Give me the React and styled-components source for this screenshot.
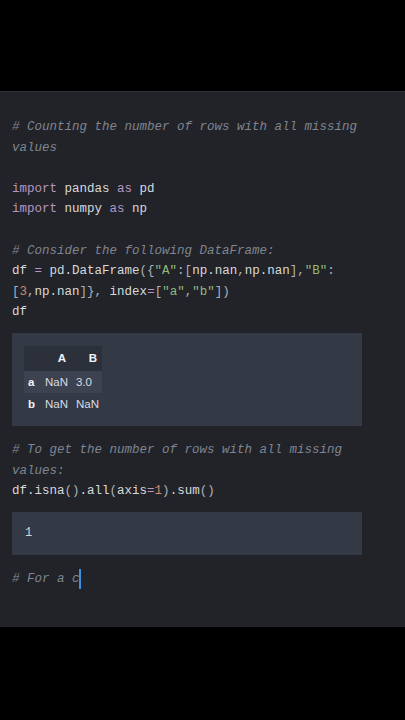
import React from "react";
import styled, { createGlobalStyle } from "styled-components";

const Global = createGlobalStyle`
  html, body { margin: 0; padding: 0; background: #000; }
  #root { width: 405px; }
`;

const Screen = styled.div`
  width: 405px;
  height: 720px;
  display: flex;
  flex-direction: column;
  background: #000;
  overflow: hidden;
`;

const Blank = styled.div`
  height: ${(p) => p.$h}px;
  flex: none;
  background: #000;
`;

const Editor = styled.div`
  height: 536px;
  flex: none;
  background: #212328;
  border-top: 1px solid #2c2e33;
  box-sizing: border-box;
  padding: 25px 43px 0 12px;
  display: flex;
  flex-direction: column;
`;

const Line = styled.div`
  height: 20.6px;
  line-height: 20.6px;
  font-family: "Liberation Mono", "DejaVu Sans Mono", monospace;
  font-size: 12.5px;
  color: #d8d9dc;
  white-space: pre;
`;

const Comment = styled.span`
  color: #7f8591;
  font-style: italic;
`;
const Kw = styled.span`
  color: #b596c4;
`;
const Str = styled.span`
  color: #93b97a;
`;
const Num = styled.span`
  color: #cf8a6c;
`;
const Op = styled.span`
  color: #b596c4;
`;
const Punct = styled.span`
  color: #aeb2ba;
`;

const Output = styled.div`
  margin: ${(p) => p.$mt}px 0 ${(p) => p.$mb}px;
  background: #343946;
  box-sizing: border-box;
  height: ${(p) => p.$h}px;
  padding: ${(p) => p.$pad};
  display: flex;
  align-items: ${(p) => (p.$center ? "center" : "flex-start")};
`;

const Table = styled.table`
  border-collapse: collapse;
  table-layout: fixed;
  width: 78px;
  font-family: "Liberation Sans", Arial, sans-serif;
  font-size: 11.5px;
  color: #d9dce3;
`;

const HeadRow = styled.tr`
  background: #2c303a;
  height: 25px;
`;

const BodyRow = styled.tr`
  background: ${(p) => (p.$alt ? "#3d4250" : "#343946")};
  height: 22px;
`;

const Th = styled.th`
  font-weight: bold;
  color: #f2f3f6;
  text-align: ${(p) => (p.$left ? "left" : "right")};
  padding: 0 5px 0 ${(p) => (p.$left ? 4 : 0)}px;
  width: ${(p) => (p.$w ? `${p.$w}px` : "auto")};
  box-sizing: border-box;
`;

const Td = styled.td`
  text-align: left;
  padding: 0 0 0 5px;
  white-space: nowrap;
`;

const OutText = styled.span`
  font-family: "Liberation Mono", "DejaVu Sans Mono", monospace;
  font-size: 12px;
  color: #d4d5d8;
`;

const Cursor = styled.span`
  display: inline-block;
  width: 2px;
  height: 20px;
  background: #3b8fe0;
  vertical-align: middle;
  margin-left: -1px;
`;

export default function App() {
  return (
    <Screen>
      <Global />
      <Blank $h={91} />
      <Editor>
        <Line><Comment># Counting the number of rows with all missing</Comment></Line>
        <Line><Comment>values</Comment></Line>
        <Line> </Line>
        <Line><Kw>import</Kw> pandas <Kw>as</Kw> pd</Line>
        <Line><Kw>import</Kw> numpy <Kw>as</Kw> np</Line>
        <Line> </Line>
        <Line><Comment># Consider the following DataFrame:</Comment></Line>
        <Line>
          df <Op>=</Op> pd.DataFrame<Punct>({"{"}</Punct><Str>"A"</Str><Punct>:[</Punct>np.nan<Punct>,</Punct>np.nan<Punct>],</Punct><Str>"B"</Str><Punct>:</Punct>
        </Line>
        <Line>
          <Punct>[</Punct><Num>3</Num><Punct>,</Punct>np.nan<Punct>]{"}"},</Punct> index<Op>=</Op><Punct>[</Punct><Str>"a"</Str><Punct>,</Punct><Str>"b"</Str><Punct>])</Punct>
        </Line>
        <Line>df</Line>
        <Output $mt={10} $mb={14} $h={93} $pad="13px 12px">
          <Table>
            <thead>
              <HeadRow>
                <Th $w={16} $left />
                <Th $w={31}>A</Th>
                <Th $w={31}>B</Th>
              </HeadRow>
            </thead>
            <tbody>
              <BodyRow $alt>
                <Th $left>a</Th>
                <Td>NaN</Td>
                <Td>3.0</Td>
              </BodyRow>
              <BodyRow>
                <Th $left>b</Th>
                <Td>NaN</Td>
                <Td>NaN</Td>
              </BodyRow>
            </tbody>
          </Table>
        </Output>
        <Line><Comment># To get the number of rows with all missing</Comment></Line>
        <Line><Comment>values:</Comment></Line>
        <Line>
          df.isna<Punct>()</Punct>.all<Punct>(</Punct>axis<Op>=</Op><Num>1</Num><Punct>)</Punct>.sum<Punct>()</Punct>
        </Line>
        <Output $mt={10} $mb={14} $h={43} $pad="0 13px" $center>
          <OutText>1</OutText>
        </Output>
        <Line><Comment># For a c</Comment><Cursor /></Line>
      </Editor>
      <Blank $h={93} />
    </Screen>
  );
}
